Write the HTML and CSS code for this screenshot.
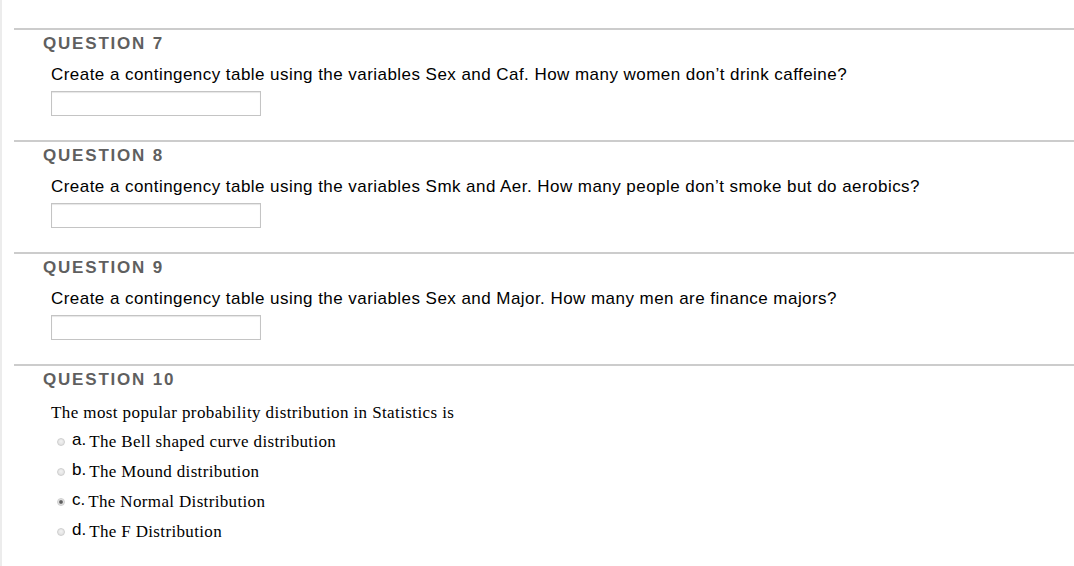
FILE: index.html
```html
<!DOCTYPE html>
<html>
<head>
<meta charset="utf-8">
<link rel="stylesheet" href="styles.css">
</head>
<body>
<div class="page">
  <section class="question">
    <h3 class="q-title">QUESTION 7</h3>
    <p class="q-text">Create a contingency table using the variables Sex and Caf. How many women don’t drink caffeine?</p>
    <input class="q-input" type="text">
  </section>
  <section class="question">
    <h3 class="q-title">QUESTION 8</h3>
    <p class="q-text">Create a contingency table using the variables Smk and Aer. How many people don’t smoke but do aerobics?</p>
    <input class="q-input" type="text">
  </section>
  <section class="question">
    <h3 class="q-title">QUESTION 9</h3>
    <p class="q-text">Create a contingency table using the variables Sex and Major. How many men are finance majors?</p>
    <input class="q-input" type="text">
  </section>
  <section class="question">
    <h3 class="q-title">QUESTION 10</h3>
    <p class="q-text serif">The most popular probability distribution in Statistics is</p>
    <ul class="options">
      <li class="option"><span class="radio"></span><span class="letter">a.</span><span class="opt-text">The Bell shaped curve distribution</span></li>
      <li class="option"><span class="radio"></span><span class="letter">b.</span><span class="opt-text">The Mound distribution</span></li>
      <li class="option"><span class="radio checked"></span><span class="letter">c.</span><span class="opt-text">The Normal Distribution</span></li>
      <li class="option"><span class="radio"></span><span class="letter">d.</span><span class="opt-text">The F Distribution</span></li>
    </ul>
  </section>
</div>
</body>
</html>
```
FILE: styles.css
```css
html, body {
  margin: 0;
  padding: 0;
  background: #fff;
}
body {
  font-family: "Liberation Sans", Arial, Helvetica, sans-serif;
  color: #000;
}
.page {
  border-left: 2px solid #ececec;
  min-height: 566px;
  box-sizing: border-box;
  padding-top: 28px;
  padding-left: 12px;
}
.question {
  border-top: 2px solid #cccccc;
  height: 110px;
}
.q-title {
  margin: 0;
  padding: 5px 0 0 29px;
  font-size: 17px;
  line-height: 18px;
  font-weight: bold;
  letter-spacing: 1.8px;
  color: #5f5f5f;
}
.q-text {
  margin: 13px 0 0 37px;
  font-size: 17px;
  line-height: 18px;
  letter-spacing: 0.45px;
  color: #000;
}
.q-text.serif {
  font-family: "Liberation Serif", "Times New Roman", serif;
  letter-spacing: 0.4px;
  margin-top: 15px;
}
.q-input {
  display: block;
  margin: 7px 0 0 37px;
  width: 210px;
  height: 25px;
  box-sizing: border-box;
  border: 1px solid #c4c4c4;
  box-shadow: inset 0 1px 1px #e6e6e6;
  padding: 2px 4px;
  font-size: 14px;
}
.options {
  list-style: none;
  margin: 11px 0 0 40px;
  padding: 0;
}
.option {
  display: flex;
  align-items: baseline;
  height: 30px;
  line-height: 18px;
}
.radio {
  display: inline-block;
  width: 8px;
  height: 8px;
  border-radius: 50%;
  border: 1px solid #cfcfcf;
  background: radial-gradient(circle at 50% 40%, #f2f2f2 0%, #dcdcdc 100%);
  box-sizing: border-box;
  margin-left: 3px;
  margin-right: 7px;
  align-self: flex-start;
  margin-top: 5px;
}
.radio.checked {
  background: radial-gradient(circle, #5e5e5e 0 1.3px, #9a9a9a 1.8px, #e2e2e2 2.4px);
}
.letter {
  font-family: "Liberation Sans", Arial, sans-serif;
  font-size: 17px;
  margin-right: 3px;
  position: relative;
  top: -2px;
}
.opt-text {
  font-family: "Liberation Serif", "Times New Roman", serif;
  font-size: 17px;
  letter-spacing: 0.35px;
}
```
